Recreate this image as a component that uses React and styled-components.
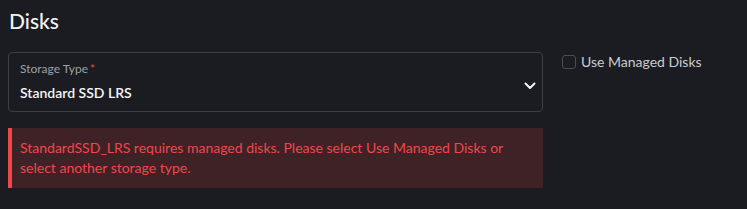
import React from "react";
import styled, { createGlobalStyle } from "styled-components";

const GlobalStyle = createGlobalStyle`
  body {
    margin: 0;
    background: #1b1c21;
    font-family: Lato, "Noto Sans", sans-serif;
  }
`;

const Page = styled.div`
  padding: 6px 8px 8px 8px;
  color: #e6e8eb;
`;

const Title = styled.h2`
  margin: 0 0 16px 0;
  padding-left: 1px;
  font-size: 21px;
  line-height: 30px;
  font-weight: 500;
  color: #f1f2f4;
`;

const Row = styled.div`
  display: flex;
  align-items: flex-start;
  gap: 19px;
`;

const Column = styled.div`
  width: 535px;
  display: flex;
  flex-direction: column;
  gap: 16px;
`;

const SelectBox = styled.div`
  position: relative;
  box-sizing: border-box;
  height: 60px;
  border: 1px solid #3b3e45;
  border-radius: 4px;
  padding: 8px 11px;
  cursor: pointer;
`;

const Label = styled.div`
  font-size: 12px;
  line-height: 16px;
  color: #9ca1aa;
  margin-bottom: 6px;
`;

const Required = styled.span`
  color: #ef4444;
  margin-left: 2px;
`;

const Value = styled.div`
  font-size: 14px;
  line-height: 20px;
  font-weight: 600;
  color: #f4f5f7;
`;

const Chevron = styled.svg`
  position: absolute;
  right: 6px;
  top: 29px;
`;

const Alert = styled.div`
  box-sizing: border-box;
  height: 60px;
  background: #3e2226;
  border-left: 4px solid #f0474b;
  padding: 10px 8px;
  font-size: 14px;
  line-height: 20px;
  color: #f0474b;
`;

const CheckLabel = styled.label`
  display: flex;
  align-items: center;
  gap: 5px;
  font-size: 14px;
  line-height: 20px;
  color: #c9ccd2;
  cursor: pointer;
`;

const Box = styled.span`
  box-sizing: border-box;
  width: 14px;
  height: 14px;
  border: 1px solid #4a4d55;
  border-radius: 3px;
  background: #1b1c21;
`;

export default function App() {
  return (
    <>
      <GlobalStyle />
      <Page>
        <Title>Disks</Title>
        <Row>
          <Column>
            <SelectBox>
              <Label>
                Storage Type<Required>*</Required>
              </Label>
              <Value>Standard SSD LRS</Value>
              <Chevron width="12" height="8" viewBox="0 0 12 8">
                <path
                  d="M1.5 1.5 L6 6 L10.5 1.5"
                  fill="none"
                  stroke="#f4f5f7"
                  strokeWidth="2"
                  strokeLinecap="round"
                  strokeLinejoin="round"
                />
              </Chevron>
            </SelectBox>
            <Alert>
              StandardSSD_LRS requires managed disks. Please select Use Managed
              Disks or select another storage type.
            </Alert>
          </Column>
          <CheckLabel>
            <Box />
            Use Managed Disks
          </CheckLabel>
        </Row>
      </Page>
    </>
  );
}
